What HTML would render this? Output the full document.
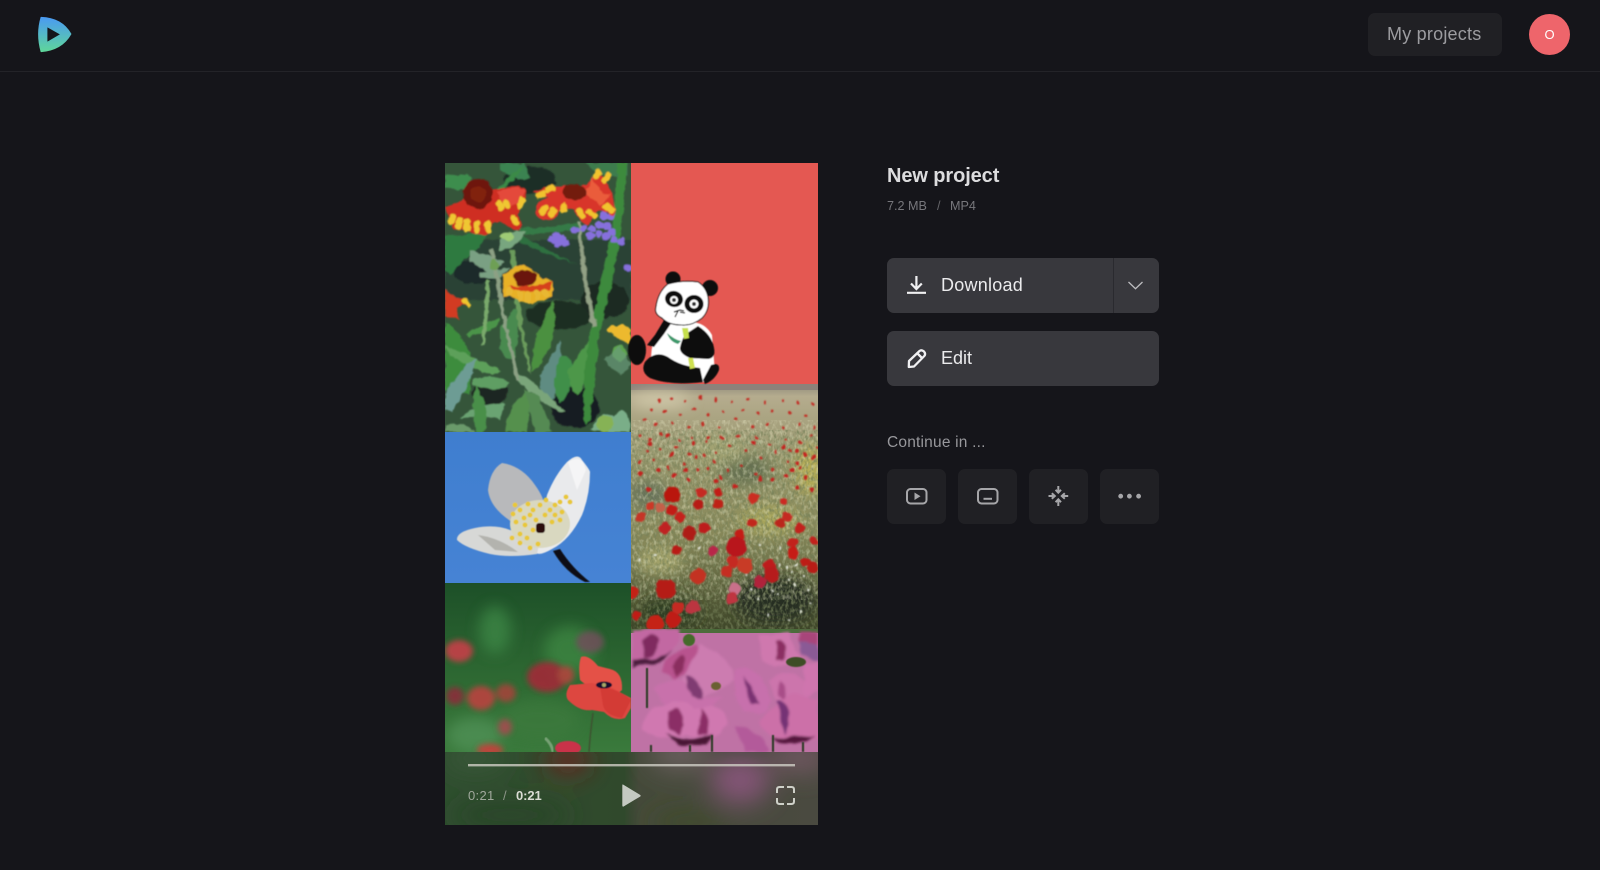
<!DOCTYPE html>
<html><head><meta charset="utf-8"><title>New project</title>
<style>
*{box-sizing:border-box}
html,body{margin:0;padding:0;width:1600px;height:870px;overflow:hidden;background:#15151a;font-family:"Liberation Sans",sans-serif}
.a{position:absolute;white-space:nowrap}
.btn{position:absolute;border-radius:7px}
svg{display:block}
</style></head><body>
<div class="a" style="left:0;top:71px;width:1600px;height:1px;background:#232328"></div>
<svg class="a" style="left:0;top:0" width="90" height="70" viewBox="0 0 90 70">
<defs><linearGradient id="lg" x1="0" y1="0" x2="0" y2="1"><stop offset="0" stop-color="#4a9af2"/><stop offset="1" stop-color="#5fd69a"/></linearGradient></defs>
<path fill-rule="evenodd" fill="url(#lg)" d="M41 17.3Q62 18 71 34Q62 50 41 51.7Q36 34 41 17.3ZM47 26.7V42.3L60.7 34.4Z" stroke="url(#lg)" stroke-width=".8" stroke-linejoin="round"/></svg>
<div class="btn" style="left:1368px;top:13px;width:134px;height:43px;background:#202024"></div>
<div class="a" style="left:1387px;top:24px;font-size:18px;line-height:21px;color:#9c9ca0;letter-spacing:.22px">My projects</div>
<div class="a" style="left:1529px;top:14px;width:41px;height:41px;border-radius:50%;background:#ee656b;color:#fff;font-size:13px;line-height:41px;text-align:center">O</div>

<div class="a" style="left:445px;top:163px;width:373px;height:662px;overflow:hidden;background:#333">
<svg width="373" height="662" viewBox="445 163 373 662">
<defs>
<filter id="org" x="-5%" y="-5%" width="110%" height="110%"><feTurbulence type="fractalNoise" baseFrequency=".13" numOctaves="2" seed="4" result="n"/><feDisplacementMap in="SourceGraphic" in2="n" scale="5" xChannelSelector="R" yChannelSelector="G"/><feGaussianBlur stdDeviation=".7"/></filter>
<filter id="org2" x="-5%" y="-5%" width="110%" height="110%"><feTurbulence type="fractalNoise" baseFrequency=".06" numOctaves="2" seed="9" result="n"/><feDisplacementMap in="SourceGraphic" in2="n" scale="7" xChannelSelector="G" yChannelSelector="R"/><feGaussianBlur stdDeviation="1.3"/></filter>
<filter id="spk" x="0" y="0" width="100%" height="100%"><feTurbulence type="fractalNoise" baseFrequency=".35 .22" numOctaves="2" seed="7"/><feColorMatrix values="0 0 0 0 .18  0 0 0 0 .22  0 0 0 0 .1  2.6 0 0 0 -1.05"/></filter>
<filter id="spk2" x="0" y="0" width="100%" height="100%"><feTurbulence type="fractalNoise" baseFrequency=".3 .2" numOctaves="2" seed="15"/><feColorMatrix values="0 0 0 0 .85  0 0 0 0 .85  0 0 0 0 .6  0 2.6 0 0 -1.15"/></filter>
<filter id="b1" x="-5%" y="-5%" width="110%" height="110%"><feGaussianBlur stdDeviation=".6"/></filter>
<filter id="b3" x="-30%" y="-30%" width="160%" height="160%"><feGaussianBlur stdDeviation="3"/></filter>
<filter id="b6" x="-50%" y="-50%" width="200%" height="200%"><feGaussianBlur stdDeviation="7"/></filter>
<filter id="b14" x="-80%" y="-80%" width="260%" height="260%"><feGaussianBlur stdDeviation="13"/></filter>
<linearGradient id="sky" x1="0" y1="0" x2="0" y2="1"><stop offset="0" stop-color="#3f7ecf"/><stop offset="1" stop-color="#4683d4"/></linearGradient>
<linearGradient id="fld" x1="0" y1="0" x2="0" y2="1"><stop offset="0" stop-color="#8f8a7a"/><stop offset=".05" stop-color="#b5ac8e"/><stop offset=".3" stop-color="#97966c"/><stop offset=".6" stop-color="#88895a"/><stop offset="1" stop-color="#3f4729"/></linearGradient>
<linearGradient id="grn" x1="0" y1="0" x2="0" y2="1"><stop offset="0" stop-color="#1d5028"/><stop offset=".5" stop-color="#2c6631"/><stop offset="1" stop-color="#3a7a3c"/></linearGradient>
<linearGradient id="ctl" x1="0" y1="0" x2="1" y2="0"><stop offset="0" stop-color="#2f4e2f"/><stop offset=".48" stop-color="#30492c"/><stop offset=".52" stop-color="#454a3a"/><stop offset="1" stop-color="#4a4a40"/></linearGradient>
</defs>

<!-- tile 1 -->
<svg x="445" y="163" width="186" height="269" viewBox="445 163 186 269">
<rect x="445" y="163" width="186" height="269" fill="#35553a"/>
<g filter="url(#org)">
<path d="M445 240L631 240V300L445 300Z" fill="#2a4234"/>
<ellipse cx="475" cy="272" rx="22" ry="12" fill="#1c2a2a"/><ellipse cx="560" cy="315" rx="34" ry="14" fill="#1f2e24"/>
<ellipse cx="575" cy="408" rx="24" ry="20" fill="#181f20"/><ellipse cx="490" cy="393" rx="18" ry="12" fill="#1e2620"/>
<ellipse cx="605" cy="300" rx="24" ry="18" fill="#1c2a22"/><ellipse cx="530" cy="180" rx="26" ry="14" fill="#1e2e26"/>
<path d="M445 176Q465 172 472 178L470 190L445 188Z" fill="#3e8d4e"/>
<path d="M500 163H525L530 178Q512 180 500 170Z" fill="#3b8351"/>
<path d="M585 163H628L628 176Q600 180 585 163Z" fill="#3c7c4e"/>
<path d="M497 190Q512 172 525 165L520 172Q510 182 500 192Z" fill="#3a8a46"/>
<path d="M520 228Q560 226 580 222L578 230Q550 232 524 236Z" fill="#357a46"/>
<path d="M520 235Q550 250 578 266L570 262Q545 255 520 242Z" fill="#2f6f40"/>
<path d="M445 235Q470 235 490 230L480 246Q462 262 450 274L445 270Z" fill="#2f7a40"/>
<path d="M470 250L505 262L490 272L470 262ZM480 272L510 268L500 278L480 278Z" fill="#7aa083"/>
<path d="M500 240Q510 228 525 232Q515 250 500 250Z" fill="#78a67f"/>
<path d="M445 323Q452 322 470 352L470 394L445 390Z" fill="#3d8c3d"/>
<path d="M465 335Q480 325 500 318L496 328L470 338Z" fill="#4b9448"/>
<path d="M500 330Q512 305 520 310L515 360Q505 360 500 350Z" fill="#4a8a4f"/>
<path d="M445 345Q470 355 500 370L493 375Q470 368 450 355Z" fill="#5da05a"/>
<path d="M472 380Q490 372 510 382L505 388Q485 392 472 384Z" fill="#5f9e63"/>
<path d="M532 372Q530 340 553 300Q558 330 548 350Q540 368 532 372Z" fill="#4c9040"/>
<path d="M540 375Q555 350 560 340Q565 380 550 405Q540 395 540 375Z" fill="#5e8c82"/>
<path d="M560 358Q570 350 575 375Q570 395 560 402Q548 380 560 358Z" fill="#3f8f4a"/>
<path d="M568 370Q585 345 592 338Q595 365 578 395Q570 392 568 370Z" fill="#4d9748"/>
<path d="M445 395Q462 365 476 358Q468 390 452 412L445 410Z" fill="#6d9c94"/>
<path d="M505 432Q508 400 530 390Q532 410 526 432Z" fill="#54904e"/>
<path d="M470 410Q500 400 505 405L500 420Q480 415 460 418Z" fill="#6aa372"/>
<path d="M476 432Q470 400 477 385Q492 410 484 432Z" fill="#4a8f49"/>
<path d="M515 372Q535 380 565 412L560 412Q530 395 515 378Z" fill="#7aa57a"/>
<path d="M525 390L540 398L552 432H535Z" fill="#548a52"/>
<path d="M445 425Q460 420 475 432H445Z" fill="#6a9a6a"/>
<path d="M608 432Q620 395 630 420V432Z M590 430Q605 405 615 420L625 432Z" fill="#7aae88"/>
<circle cx="605" cy="424" r="8" fill="#86b255"/>
<path d="M617 163H627Q623 230 612 280L600 330Q596 370 590 420L585 425Q580 380 592 320L606 260Q616 210 617 163Z" fill="#3e8a3e"/>
<path d="M493 248Q500 280 508 330L520 380L516 380Q502 320 490 250Z" fill="#8ca084"/>
<path d="M515 250Q520 320 532 375L528 370Q512 300 510 250Z" fill="#6a9b5c"/>
<path d="M581 222Q585 280 597 325L592 328Q580 270 578 222Z" fill="#93a286"/>
<path d="M490 280Q488 320 485 345L481 345Q485 310 486 280Z" fill="#7aaa6c"/>
<ellipse cx="507" cy="236" rx="7" ry="4" fill="#9ecb74"/><ellipse cx="494" cy="265" rx="4" ry="6" fill="#6e9f55"/>
<circle cx="620" cy="353" r="8" fill="#5da54e"/><path d="M604 360L620 345L631 365L620 375Z" fill="#6b9b7a" opacity=".7"/>
<!-- purple -->
<path d="M557 236h0M563 238h0M552 240h0M558 243h0M565 243h0M575 230h0M583 228h0M592 228h0M600 225h0M607 226h0M590 236h0M598 234h0M606 236h0M612 232h0M614 240h0M622 241h0M604 216h0M611 216h0M628 268h0M597 189h0" stroke="#8670dc" stroke-width="8" stroke-linecap="round" fill="none"/>
<!-- flower 1 -->
<path d="M445 207Q468 198 482 192L510 187Q528 185 526 196Q522 205 518 216Q524 222 520 230Q512 232 505 224Q494 218 492 226Q490 236 482 234Q470 233 462 230Q450 232 453 224L447 213Z" fill="#cf2e24"/>
<path d="M497 192Q515 185 525 190Q524 202 512 206Q500 204 497 192Z" fill="#e4483a"/>
<circle cx="478" cy="194" r="15" fill="#6e170c"/><circle cx="478" cy="194" r="8" fill="#81200f"/>
<path d="M451 222L453 217M459 227L460 220M467 229L467 222M477 230L477 224M488 230L488 224M498 203L501 207M506 203L508 206M513 218L516 222M520 205L523 200" stroke="#efc733" stroke-width="6.5" stroke-linecap="round"/>
<!-- flower 2 -->
<path d="M533 192Q545 188 555 186Q568 186 580 188L592 178L598 173L606 180L612 196Q616 206 614 216Q604 210 597 212Q592 224 585 224Q578 220 574 210Q566 208 560 210Q554 224 546 220Q538 222 535 212Q535 200 548 198Z" fill="#d8352a"/>
<path d="M592 176Q600 196 610 195L600 206L586 192Z" fill="#ea5c3a"/>
<ellipse cx="575" cy="192" rx="12" ry="8" fill="#731a10"/>
<path d="M538 196L543 194M542 212L546 208M551 215L554 210M564 206L563 211M580 211L582 216M590 212L595 216M606 206L611 210M596 176L598 172M605 180L609 175M548 190L552 188" stroke="#f1c32f" stroke-width="6.5" stroke-linecap="round"/>
<!-- flower 3 -->
<path d="M503 276L515 266L525 264L540 277L552 280L552 296L545 300L532 304L518 300L510 296L503 296Z" fill="#e8b127"/>
<ellipse cx="525" cy="278" rx="12" ry="8" fill="#6a1610"/>
<path d="M506 287Q520 285 530 286Q545 284 552 280L548 290L530 292Z" fill="#d6401f"/>
<path d="M509 293V290M520 298V293M528 300V295M537 298V293M546 295L544 292" stroke="#e8b732" stroke-width="6" stroke-linecap="round"/>
<!-- left flower -->
<path d="M445 290Q456 296 470 303Q472 310 462 305L456 308L460 320L452 318L445 316Z" fill="#d23a20"/>
<path d="M464 301L469 305" stroke="#efc52f" stroke-width="5" stroke-linecap="round"/>
<!-- right yellow -->
<path d="M606 330L612 325L624 325L631 330L631 345L620 340Z" fill="#edb92d"/>
</g></svg>

<!-- tile red -->
<rect x="631" y="163" width="187" height="222" fill="#e45852"/>

<!-- blue tile -->
<svg x="445" y="432" width="186" height="151" viewBox="445 432 186 151">
<rect x="445" y="432" width="186" height="151" fill="url(#sky)"/>
<g filter="url(#b1)">
<path d="M553 551Q565 572 585 582L590 582Q572 568 560 549Z" fill="#0c0d12"/>
<path d="M512 522Q490 508 488 490Q490 470 502 463Q522 466 535 485Q546 500 545 512Z" fill="#b8b9bb"/>
<path d="M547 495Q555 475 567 462Q578 452 582 460Q590 470 590 472Q590 495 582 515Q570 540 552 549Q540 556 536 553L540 530Z" fill="#e9eaec"/>
<path d="M568 462Q578 456 583 462L586 470L577 490Z" fill="#f5f5f6"/>
<path d="M537 554Q510 558 490 554Q465 548 457 540Q456 532 475 528Q495 524 510 530L540 540Z" fill="#d7d8d6"/>
<path d="M478 535Q500 538 518 552L495 550Z" fill="#b3b3ae"/>
<ellipse cx="540" cy="524" rx="30" ry="24" fill="#d9d8c0"/>
<path d="M515 505h0M516 522h0M513 514h0M524 518h0M520 510h0M533 510h0M528 504h0M540 505h0M546 500h0M550 510h0M555 505h0M560 502h0M566 497h0M570 502h0M562 512h0M555 515h0M512 538h0M520 534h0M527 538h0M533 530h0M538 544h0M530 548h0M525 525h0M545 515h0M552 522h0M520 543h0M536 520h0M560 520h0M530 515h0" stroke="#e8c838" stroke-width="5" stroke-linecap="round"/>
<rect x="536" y="523" width="9" height="10" rx="3" fill="#2c0f10"/>
</g></svg>

<!-- green tile -->
<svg x="445" y="583" width="186" height="169" viewBox="445 583 186 169">
<rect x="445" y="583" width="186" height="169" fill="url(#grn)"/>
<g filter="url(#b6)" opacity=".7">
<ellipse cx="495" cy="630" rx="16" ry="24" fill="#3f8c4a"/><ellipse cx="570" cy="650" rx="26" ry="24" fill="#3f8b45"/>
<ellipse cx="475" cy="735" rx="28" ry="18" fill="#52945a"/>
<ellipse cx="540" cy="720" rx="40" ry="20" fill="#3c7a3e"/>
</g>
<g filter="url(#b3)" opacity=".85">
<ellipse cx="459" cy="651" rx="14" ry="11" fill="#cf3c48"/>
<ellipse cx="547" cy="677" rx="20" ry="15" fill="#a82838"/><ellipse cx="566" cy="675" rx="8" ry="9" fill="#b8423c"/>
<ellipse cx="481" cy="698" rx="14" ry="12" fill="#c23f40"/><ellipse cx="506" cy="693" rx="10" ry="9" fill="#a8423a"/>
<ellipse cx="455" cy="696" rx="9" ry="9" fill="#8f2a3a"/><ellipse cx="505" cy="727" rx="7" ry="8" fill="#a84a50"/>
<ellipse cx="590" cy="642" rx="14" ry="11" fill="#70505a"/><ellipse cx="490" cy="750" rx="13" ry="6" fill="#d23a3a"/>
</g>
<ellipse cx="568" cy="748" rx="13" ry="7" fill="#c9304a" filter="url(#b1)"/>
<path d="M545 738Q552 744 553 752" stroke="#b4c9ae" stroke-width="3" fill="none" opacity=".5" filter="url(#b1)"/>
<g filter="url(#b1)">
<path d="M593 713Q590 735 589 752" stroke="#3d5230" stroke-width="1.5" fill="none"/>
<path d="M581 657Q588 654 598 666L610 669Q623 672 622 690L616 695Q590 690 580 680Q578 665 581 657Z" fill="#e45147"/>
<path d="M592 683L570 685Q564 694 568 700Q580 712 592 710L604 712Q614 722 625 718L631 708V698L612 688Z" fill="#dd4640"/>
<path d="M600 686Q620 690 631 700L622 718Q605 715 603 705Z" fill="#d33a36"/>
<ellipse cx="604" cy="685" rx="8" ry="3.5" fill="#170f2e"/><circle cx="604" cy="685" r="2" fill="#a8a868"/>
</g></svg>

<!-- field tile -->
<svg x="631" y="384" width="187" height="245" viewBox="631 384 187 245">
<rect x="631" y="384" width="187" height="245" fill="url(#fld)"/>
<rect x="631" y="384" width="187" height="6" fill="#8c827a"/>
<g filter="url(#b6)">
<ellipse cx="660" cy="400" rx="30" ry="8" fill="#cfc7a8"/><ellipse cx="745" cy="470" rx="26" ry="14" fill="#5f6a4e"/>
<ellipse cx="648" cy="495" rx="20" ry="14" fill="#65705a"/><ellipse cx="810" cy="470" rx="14" ry="25" fill="#b5ad55"/>
<ellipse cx="770" cy="520" rx="30" ry="14" fill="#a8a65c"/><ellipse cx="660" cy="560" rx="25" ry="14" fill="#a3a36a"/>
<ellipse cx="775" cy="600" rx="42" ry="24" fill="#262d20"/><ellipse cx="670" cy="612" rx="30" ry="14" fill="#2f3c24"/>
<ellipse cx="720" cy="450" rx="26" ry="14" fill="#a2a372"/>
</g>
<rect x="631" y="430" width="187" height="199" filter="url(#spk)" opacity=".75"/>
<rect x="631" y="420" width="187" height="180" filter="url(#spk2)" opacity=".4"/>
<g filter="url(#org)">
<path d="M660 401h0M672 399h0M685 402h0M700 398h0M716 400h0M732 402h0M748 399h0M765 402h0M782 400h0M798 402h0M812 404h0M652 410h0M665 412h0M680 414h0M694 410h0M708 415h0M724 412h0M742 410h0M758 414h0M772 411h0M790 413h0M806 416h0M645 420h0M656 424h0M672 422h0M688 428h0M702 424h0M718 428h0M736 420h0M752 426h0M768 424h0M784 428h0M800 424h0M814 428h0M640 436h0M650 440h0M662 434h0M680 440h0M692 438h0M706 442h0M722 438h0M738 436h0M756 438h0M770 444h0M786 440h0M800 442h0M812 436h0M648 452h0M660 450h0M676 448h0M690 454h0M704 456h0M716 452h0M730 446h0M746 450h0M762 458h0M776 452h0M790 450h0M804 454h0M816 448h0M640 462h0M654 460h0M668 468h0M684 464h0M698 470h0M714 462h0M728 470h0M742 466h0M756 474h0M772 470h0M788 462h0M800 468h0M812 458h0" stroke="#c32a22" stroke-width="3" stroke-linecap="round"/>
<path d="M650 444h0M668 435h0M672 455h0M696 457h0M694 444h0M708 438h0M754 443h0M784 447h0M797 451h0M805 455h0M796 463h0M814 456h0M786 476h0M792 470h0M806 478h0M812 490h0M640 473h0M658 470h0M674 476h0M688 480h0M708 468h0M720 478h0M716 482h0M735 486h0M760 478h0M772 480h0M798 488h0M648 490h0M686 470h0" stroke="#c5231f" stroke-width="4" stroke-linecap="round"/>
<circle cx="672" cy="495" r="8" fill="#b9140f"/><circle cx="702" cy="492" r="5" fill="#c52a20"/><circle cx="718" cy="492" r="4" fill="#c21f18"/>
<circle cx="718" cy="504" r="5.5" fill="#bf2018"/><circle cx="698" cy="505" r="5.5" fill="#b71b15"/><circle cx="753" cy="498" r="5" fill="#cb2f22"/>
<circle cx="783" cy="501" r="3" fill="#cc2a22"/><circle cx="660" cy="508" r="5" fill="#c4604a"/><circle cx="650" cy="506" r="4" fill="#cc3828"/>
<circle cx="672" cy="510" r="5.5" fill="#c21f18"/><circle cx="680" cy="517" r="5" fill="#c4241c"/><circle cx="641" cy="517" r="5" fill="#c53526"/>
<circle cx="665" cy="528" r="5.5" fill="#bf2320"/><circle cx="690" cy="533" r="7" fill="#ae1c18"/><circle cx="704" cy="528" r="5.5" fill="#bd1f1a"/>
<circle cx="740" cy="534" r="5" fill="#c41e18"/><circle cx="752" cy="523" r="5" fill="#c2261d"/><circle cx="780" cy="523" r="5" fill="#bb261a"/>
<circle cx="787" cy="517" r="5" fill="#c52a20"/><circle cx="800" cy="528" r="5.5" fill="#c2201a"/><circle cx="793" cy="543" r="5" fill="#c2241c"/>
<circle cx="793" cy="553" r="6" fill="#c61b18"/><circle cx="814" cy="541" r="4" fill="#c2241c"/><circle cx="736" cy="547" r="10" fill="#b8141a"/>
<circle cx="677" cy="550" r="5" fill="#b91a18"/><circle cx="713" cy="551" r="5" fill="#b8284a"/><circle cx="732" cy="562" r="6" fill="#c52a20"/>
<circle cx="745" cy="565" r="8" fill="#c83a28"/><circle cx="698" cy="576" r="8" fill="#c33020"/><circle cx="727" cy="572" r="6" fill="#c52e20"/>
<circle cx="770" cy="566" r="6" fill="#bd1e1a"/><circle cx="772" cy="575" r="8" fill="#b61a1a"/><circle cx="760" cy="582" r="6" fill="#b0203a"/>
<circle cx="805" cy="562" r="5" fill="#bd1c18"/><circle cx="813" cy="568" r="6" fill="#b81a16"/><circle cx="666" cy="589" r="10" fill="#b51a16"/>
<circle cx="633" cy="593" r="6" fill="#c32018"/><ellipse cx="735" cy="589" rx="6" ry="6" fill="#c9708a"/><circle cx="732" cy="598" r="6" fill="#bf3540"/>
<circle cx="678" cy="608" r="6" fill="#c52a20"/><circle cx="693" cy="607" r="7" fill="#bb3540"/><circle cx="637" cy="615" r="5" fill="#c01a16"/>
<circle cx="655" cy="623" r="8" fill="#c52018"/><circle cx="673" cy="620" r="8" fill="#bf1f18"/>
<path d="M780 565h0M786 568h0M792 572h0M796 565h0M804 575h0M788 580h0M795 585h0M772 590h0M778 594h0M808 590h0M812 603h0M758 600h0M768 615h0M790 620h0M800 612h0M746 575h0M752 590h0M640 560h0M655 555h0M700 548h0M760 545h0M780 548h0" stroke="#e3e6dc" stroke-width="2.4" stroke-linecap="round"/>
</g></svg>

<!-- pink tile -->
<svg x="631" y="629" width="187" height="123" viewBox="631 629 187 123">
<rect x="631" y="629" width="187" height="123" fill="#bf72a5"/>
<rect x="631" y="629" width="187" height="4" fill="#4c6c3c"/>
<g filter="url(#org2)">
<path d="M633 630Q660 626 680 630L672 650Q670 660 640 666L633 668Z" fill="#c268a2"/>
<path d="M642 640Q655 628 660 640Q660 655 645 660Z" fill="#7f2a5f"/>
<path d="M633 660Q660 662 672 650L664 660Q640 668 633 668Z" fill="#4c1c3e"/>
<path d="M660 670Q670 650 695 645Q705 655 704 660L675 680Z" fill="#b8528e"/>
<path d="M672 668Q685 650 685 660Q685 670 676 678Z" fill="#8a2e5f"/>
<path d="M700 645Q730 655 735 680L700 700L680 682Z" fill="#cc7cb0"/>
<path d="M655 690Q680 665 700 700L722 695L700 720L670 710Z" fill="#c871ab"/>
<path d="M685 675Q700 675 702 700L690 695Z" fill="#7f3a72"/>
<path d="M760 635L790 632L800 660L775 668L762 660Z" fill="#cf78ae"/>
<path d="M775 642Q790 640 785 660L777 660Z" fill="#8b2e62"/>
<path d="M800 640H818V662L800 655Z" fill="#8a5a95"/><path d="M800 632H818V645L800 640Z" fill="#a8447a"/>
<path d="M805 665L818 662V690L798 702L805 680Z" fill="#cf75ae"/>
<path d="M735 670Q760 660 770 700L765 712L745 712L735 695Z" fill="#c770ac"/><path d="M745 675Q755 695 760 705L750 705Z" fill="#7a3272"/>
<path d="M768 680Q785 665 805 680L805 700L775 700Z" fill="#cc74ac"/><path d="M780 680Q790 690 785 702L778 695Z" fill="#a84e88"/>
<path d="M640 730Q645 710 660 705Q685 695 695 710Q725 700 728 725L720 735Q705 740 685 735Q665 742 640 730Z" fill="#d078b0"/>
<path d="M668 712Q680 700 685 725L680 735L670 730ZM702 708Q712 725 705 735L698 735Z" fill="#8b2f66"/>
<path d="M665 733Q690 745 712 733L705 745H678Z" fill="#4a1636"/>
<path d="M760 720Q780 695 800 695L818 700V740L790 740Q760 735 760 720Z" fill="#cc6fa8"/>
<path d="M775 700Q795 700 785 735Z" fill="#743374"/>
<path d="M772 738L815 736L805 743H782Z" fill="#55173e"/>
<path d="M735 725Q760 730 770 752H745Z" fill="#b35a9a"/>
</g>
<g filter="url(#b1)">
<circle cx="689" cy="640" r="6" fill="#456a2c"/><ellipse cx="796" cy="662" rx="10" ry="5" fill="#3d4e26"/>
<path d="M647 668V708M651 745V752M690 745V752M712 735V752M773 735V752M803 742V752" stroke="#2c3a22" stroke-width="2"/>
<ellipse cx="716" cy="686" rx="5" ry="4" fill="#6a6030"/>
</g></svg>

<!-- panda -->
<g filter="url(#b1)" stroke-linejoin="round">
<path d="M663 322Q648 345 652 365Q670 378 703 382Q716 378 714 360L712 335Q705 322 690 322Z" fill="#fff"/>
<path d="M664 320L655 335L647 345L654 347L664 334L672 322Z" fill="#0a0a0a"/>
<ellipse cx="637" cy="350" rx="9" ry="15" fill="#0a0a0a"/>
<path d="M645 362Q655 350 668 357Q680 366 700 368L703 382Q670 386 650 378Q640 372 645 362Z" fill="#0a0a0a"/>
<path d="M698 326Q712 335 714 348Q716 358 708 359L690 358Q680 354 680 348Q682 338 686 334Z" fill="#0a0a0a"/>
<path d="M711 365Q720 362 719 370Q715 380 705 384L703 380Z" fill="#0a0a0a"/>
<circle cx="673" cy="279" r="7.5" fill="#0a0a0a"/><circle cx="710" cy="288" r="8" fill="#0a0a0a"/>
<path d="M656 307Q658 292 668 284Q682 280 698 282Q706 287 708 297Q710 310 702 318Q692 326 682 325Q668 325 662 318Q654 314 656 307Z" fill="#fff" stroke="#111" stroke-width="1"/>
<ellipse cx="674" cy="299" rx="9" ry="8" fill="#0b0b0b" transform="rotate(15 674 299)"/>
<ellipse cx="694" cy="304" rx="9.5" ry="9" fill="#0b0b0b"/>
<circle cx="674" cy="300" r="4" fill="#fff"/><circle cx="694" cy="304" r="4.5" fill="#fff"/>
<circle cx="674" cy="300" r="2" fill="#333"/><circle cx="694" cy="304" r="2" fill="#333"/>
<path d="M674 312L680 310L684 311M678 311L675 317M680 312L685 313" stroke="#111" stroke-width="1.2" fill="none"/>
<path d="M682 328L688 328L689 338L684 339Z" fill="#c6e04b"/>
<path d="M688 358L693 358L695 368L690 369Z" fill="#cee04f"/>
<path d="M667 333Q675 340 681 341L678 344Q670 342 667 333Z" fill="#3d9a6c"/>
</g>

<!-- controls -->
<svg x="445" y="752" width="373" height="73" viewBox="445 752 373 73">
<rect x="445" y="752" width="373" height="73" fill="url(#ctl)"/>
<g filter="url(#b14)">
<ellipse cx="568" cy="760" rx="22" ry="12" fill="#722424"/>
<ellipse cx="475" cy="758" rx="30" ry="10" fill="#3e5c3e"/>
<ellipse cx="740" cy="780" rx="30" ry="24" fill="#845577"/>
<ellipse cx="680" cy="755" rx="30" ry="14" fill="#6f6264"/>
<ellipse cx="800" cy="758" rx="30" ry="14" fill="#745865"/>
<ellipse cx="690" cy="822" rx="40" ry="8" fill="#3a4a20"/>
<ellipse cx="510" cy="815" rx="60" ry="10" fill="#264326"/>
</g>
</svg>
<rect x="468" y="764" width="327" height="2.4" fill="#cfcec6" opacity=".8"/>
<path d="M623 784.5Q622.3 784 622.3 786V805Q622.3 807.5 624 806.2L640.3 796.5Q641 795.7 640.3 795Z" fill="#c4c9c1"/>
<path d="M784 787H779.5Q777 787 777 789.5V793M787 787H791.5Q794 787 794 789.5V793M777 798V801.5Q777 804 779.5 804H784M794 798V801.5Q794 804 791.5 804H787" fill="none" stroke="#ced0c8" stroke-width="2"/>
</svg>
</div>
<div class="a" style="left:468px;top:788px;font-size:13px;line-height:15px;color:#a0a89c;letter-spacing:.3px">0:21</div>
<div class="a" style="left:503px;top:788px;font-size:13px;line-height:15px;color:#8e968a">/</div>
<div class="a" style="left:516px;top:788px;font-size:13px;line-height:15px;color:#dadcd4;font-weight:bold;letter-spacing:-.1px">0:21</div>

<div class="a" style="left:887px;top:165px;font-size:20px;line-height:23px;font-weight:bold;color:#dcdcde;letter-spacing:-.1px">New project</div>
<div class="a" style="left:887px;top:198px;font-size:12.6px;line-height:16px;color:#77777c">7.2 MB</div>
<div class="a" style="left:937px;top:198px;font-size:12.6px;line-height:16px;color:#66666a">/</div>
<div class="a" style="left:950px;top:198px;font-size:12.6px;line-height:16px;color:#77777c">MP4</div>

<div class="btn" style="left:886.5px;top:258px;width:272.5px;height:55px;background:#38383d"></div>
<div class="a" style="left:1113px;top:258px;width:1px;height:55px;background:#2a2a2f"></div>
<div class="a" style="left:941px;top:275px;font-size:18px;line-height:21px;color:#ebebed;letter-spacing:.25px">Download</div>
<svg class="a" style="left:900px;top:270px" width="32" height="30" viewBox="900 270 32 30"><path d="M916.4 276V288.5M911 283.5L916.4 289L921.8 283.5" fill="none" stroke="#f0f0f2" stroke-width="2.2"/><path d="M907 292.8H926" stroke="#f0f0f2" stroke-width="2.2"/></svg>
<svg class="a" style="left:1120px;top:275px" width="30" height="20" viewBox="1120 275 30 20"><path d="M1128.5 282L1135.5 288.7L1142.5 282" fill="none" stroke="#bdbdc0" stroke-width="1.3"/></svg>

<div class="btn" style="left:886.5px;top:331px;width:272.5px;height:55px;background:#38383d"></div>
<div class="a" style="left:941px;top:348px;font-size:18px;line-height:21px;color:#ebebed">Edit</div>
<svg class="a" style="left:900px;top:345px" width="32" height="28" viewBox="900 345 32 28"><path d="M909 361L919.5 351Q921.5 349.5 924 351.5Q926 354 924.3 356L914 366.5L908.8 367Z" fill="none" stroke="#f0f0f2" stroke-width="2.3" stroke-linejoin="round"/><path d="M917.5 353.5L922 358" stroke="#f0f0f2" stroke-width="2.3"/></svg>

<div class="a" style="left:887px;top:434px;font-size:15.5px;line-height:18px;color:#98989c;letter-spacing:.2px">Continue in ...</div>
<div class="btn" style="left:886.5px;top:469px;width:59.5px;height:55px;background:#202024"></div>
<div class="btn" style="left:957.6px;top:469px;width:59.5px;height:55px;background:#202024"></div>
<div class="btn" style="left:1028.7px;top:469px;width:59.5px;height:55px;background:#202024"></div>
<div class="btn" style="left:1099.7px;top:469px;width:59.3px;height:55px;background:#202024"></div>
<svg class="a" style="left:890px;top:470px" width="270" height="52" viewBox="890 470 270 52">
<rect x="907" y="489" width="19.5" height="14.5" rx="3.5" fill="none" stroke="#a6a6a9" stroke-width="2"/><path d="M914.5 492.5V500L920.5 496.2Z" fill="#a6a6a9"/>
<rect x="978" y="489" width="19.5" height="14.5" rx="3.5" fill="none" stroke="#a6a6a9" stroke-width="2"/><path d="M983.5 498.8H992" stroke="#a6a6a9" stroke-width="2"/>
<g fill="none" stroke="#a6a6a9" stroke-width="2"><path d="M1058.3 486V492.5M1055.6 489.8L1058.3 492.7L1061 489.8M1058.3 506V499.5M1055.6 502.2L1058.3 499.3L1061 502.2M1048.5 496H1055M1051.8 493.3L1054.8 496L1051.8 498.7M1068.2 496H1061.6M1064.8 493.3L1061.8 496L1064.8 498.7"/></g>
<g fill="#a6a6a9"><circle cx="1120.7" cy="496.2" r="2.4"/><circle cx="1129.4" cy="496.2" r="2.4"/><circle cx="1138.6" cy="496.2" r="2.4"/></g>
</svg>
</body></html>
